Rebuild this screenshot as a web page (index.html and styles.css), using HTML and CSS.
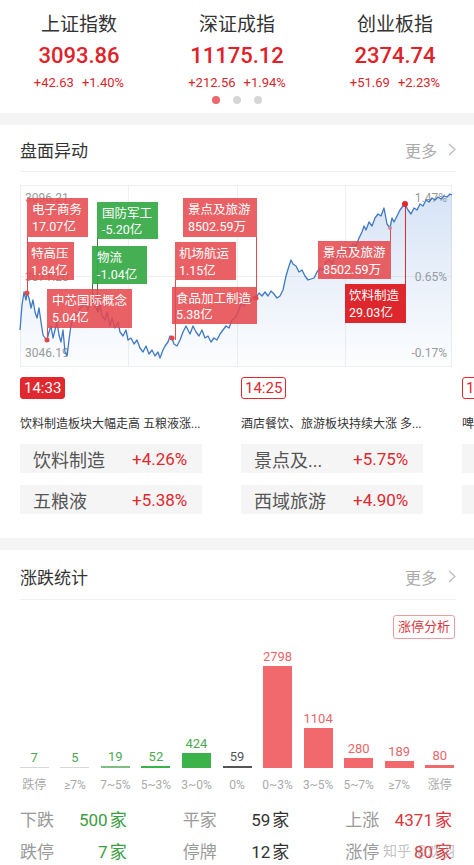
FILE: index.html
```html
<!doctype html>
<html lang="zh-CN">
  <head>
    <meta charset="utf-8" />
    <meta name="viewport" content="width=device-width, initial-scale=1" />
    <title>行情 - 盘面异动</title>
    <link rel="stylesheet" href="styles.css">
  </head>
  <body>
    <div class="indices">
      <div class="index">
        <div class="index-name">上证指数</div>
        <div class="index-value">3093.86</div>
        <div class="index-change"><span>+42.63</span><span>+1.40%</span></div>
      </div>
      <div class="index">
        <div class="index-name">深证成指</div>
        <div class="index-value">11175.12</div>
        <div class="index-change"><span>+212.56</span><span>+1.94%</span></div>
      </div>
      <div class="index">
        <div class="index-name">创业板指</div>
        <div class="index-value">2374.74</div>
        <div class="index-change"><span>+51.69</span><span>+2.23%</span></div>
      </div>
    </div>
    <div class="pager">
      <span class="dot active"></span><span class="dot"></span><span class="dot"></span>
    </div>

    <div class="band"></div>

    <!-- 盘面异动 -->
    <div class="section-head">
      <span class="section-title">盘面异动</span>
      <span class="more">更多
        <svg width="8" height="13" viewBox="0 0 8 13"><polyline points="1,1 7,6.5 1,12" fill="none" stroke="#bbb" stroke-width="1.2"/></svg>
      </span>
    </div>

    <svg class="intraday" width="474" height="198" viewBox="0 172 474 198">
      <defs>
        <linearGradient id="area" x1="0" y1="186" x2="0" y2="366" gradientUnits="userSpaceOnUse">
          <stop offset="0" stop-color="#7aa6e0" stop-opacity="0.32"/>
          <stop offset="1" stop-color="#7aa6e0" stop-opacity="0.02"/>
        </linearGradient>
      </defs>
      <g stroke="#efefef" stroke-width="1" fill="none">
        <rect x="20.5" y="185.5" width="431" height="181"/>
        <line x1="128.5" y1="186" x2="128.5" y2="366"/>
        <line x1="237.5" y1="186" x2="237.5" y2="366"/>
        <line x1="345.5" y1="186" x2="345.5" y2="366"/>
        <line x1="20" y1="276.5" x2="452" y2="276.5"/>
      </g>
      <g class="axis">
        <text x="25" y="202">3096.21</text>
        <text x="25" y="281">3071.20</text>
        <text x="25" y="357">3046.19</text>
        <text x="447" y="202" text-anchor="end">1.47%</text>
        <text x="447" y="281" text-anchor="end">0.65%</text>
        <text x="447" y="357" text-anchor="end">-0.17%</text>
      </g>
      <path fill="url(#area)" d="M20,330 L22,305 24,292 26,300 27,293 29,298 31,308 33,300 35,312 37,318 39,308 41,322 43,335 45,338 47,340 49,332 51,326 53,338 55,330 57,322 59,335 61,342 63,330 65,352 67,356 69,340 71,325 73,318 75,312 78,316 80,308 83,306 86,302 88,310 90,303 93,298 95,306 98,312 100,304 102,316 105,320 107,312 110,326 112,318 115,328 118,322 120,332 123,336 126,330 128,340 131,338 134,344 137,340 140,348 143,352 146,346 149,354 152,350 155,356 158,352 160,358 163,350 165,346 168,342 170,336 172,338 174,344 177,346 180,340 183,332 186,326 188,330 190,334 193,326 196,332 199,336 202,330 205,338 208,336 211,342 214,338 217,340 220,334 223,330 226,326 229,328 232,320 235,318 238,312 241,304 244,306 247,300 250,302 253,297 256,298 259,293 262,296 265,292 268,296 271,291 274,294 277,298 280,296 283,290 286,276 289,266 291,260 293,264 296,266 299,272 302,270 305,276 308,280 311,279 314,278 317,272 320,268 323,270 326,262 329,260 332,264 335,256 338,258 341,252 344,254 347,248 350,250 353,244 356,246 359,238 362,232 364,226 366,230 369,222 372,226 375,218 378,214 381,216 384,208 387,224 390,228 392,218 394,222 397,216 400,210 403,206 405,204 408,210 411,214 414,208 417,210 420,204 423,206 426,200 429,202 432,198 435,200 438,197 441,199 444,196 447,197 450,194 452,195 L452,366 L20,366 Z"/>
      <path fill="none" stroke="#3f78c4" stroke-width="1.3" stroke-linejoin="round" d="M20,330 L22,305 24,292 26,300 27,293 29,298 31,308 33,300 35,312 37,318 39,308 41,322 43,335 45,338 47,340 49,332 51,326 53,338 55,330 57,322 59,335 61,342 63,330 65,352 67,356 69,340 71,325 73,318 75,312 78,316 80,308 83,306 86,302 88,310 90,303 93,298 95,306 98,312 100,304 102,316 105,320 107,312 110,326 112,318 115,328 118,322 120,332 123,336 126,330 128,340 131,338 134,344 137,340 140,348 143,352 146,346 149,354 152,350 155,356 158,352 160,358 163,350 165,346 168,342 170,336 172,338 174,344 177,346 180,340 183,332 186,326 188,330 190,334 193,326 196,332 199,336 202,330 205,338 208,336 211,342 214,338 217,340 220,334 223,330 226,326 229,328 232,320 235,318 238,312 241,304 244,306 247,300 250,302 253,297 256,298 259,293 262,296 265,292 268,296 271,291 274,294 277,298 280,296 283,290 286,276 289,266 291,260 293,264 296,266 299,272 302,270 305,276 308,280 311,279 314,278 317,272 320,268 323,270 326,262 329,260 332,264 335,256 338,258 341,252 344,254 347,248 350,250 353,244 356,246 359,238 362,232 364,226 366,230 369,222 372,226 375,218 378,214 381,216 384,208 387,224 390,228 392,218 394,222 397,216 400,210 403,206 405,204 408,210 411,214 414,208 417,210 420,204 423,206 426,200 429,202 432,198 435,200 438,197 441,199 444,196 447,197 450,194 452,195"/>
      <g stroke-width="1">
        <line x1="27.5" y1="237" x2="27.5" y2="293" stroke="#e04b50"/>
        <line x1="47.5" y1="328" x2="47.5" y2="340" stroke="#e04b50"/>
        <line x1="97.5" y1="239" x2="97.5" y2="312" stroke="#3a7a3a"/>
        <line x1="92.5" y1="284" x2="92.5" y2="303" stroke="#3a7a3a"/>
        <line x1="256.5" y1="237" x2="256.5" y2="298" stroke="#e04b50"/>
        <line x1="175.5" y1="280" x2="175.5" y2="340" stroke="#e04b50"/>
        <line x1="390.5" y1="228" x2="390.5" y2="241" stroke="#e04b50"/>
        <line x1="405.5" y1="204" x2="405.5" y2="284" stroke="#e02a30"/>
      </g>
      <g class="tag red">
        <rect x="27" y="198" width="61" height="39"/>
        <text x="32" y="214">电子商务</text><text x="32" y="231">17.07亿</text>
      </g>
      <g class="tag red">
        <rect x="27" y="242" width="47" height="38"/>
        <text x="31" y="258">特高压</text><text x="31" y="275">1.84亿</text>
      </g>
      <g class="tag red">
        <rect x="47" y="289" width="85" height="39"/>
        <text x="52" y="305">中芯国际概念</text><text x="52" y="322">5.04亿</text>
      </g>
      <g class="tag green">
        <rect x="97" y="202" width="61" height="37"/>
        <text x="102" y="218">国防军工</text><text x="102" y="234">-5.20亿</text>
      </g>
      <g class="tag green">
        <rect x="92" y="246" width="55" height="38"/>
        <text x="97" y="262">物流</text><text x="97" y="279">-1.04亿</text>
      </g>
      <g class="tag red">
        <rect x="183" y="198" width="74" height="39"/>
        <text x="188" y="214">景点及旅游</text><text x="188" y="231">8502.59万</text>
      </g>
      <g class="tag red">
        <rect x="175" y="242" width="61" height="38"/>
        <text x="179" y="258">机场航运</text><text x="179" y="275">1.15亿</text>
      </g>
      <g class="tag red">
        <rect x="172" y="287" width="85" height="37"/>
        <text x="176" y="303">食品加工制造</text><text x="176" y="319">5.38亿</text>
      </g>
      <g class="tag red">
        <rect x="318" y="241" width="73" height="38"/>
        <text x="323" y="257">景点及旅游</text><text x="323" y="274">8502.59万</text>
      </g>
      <g class="tag strong">
        <rect x="345" y="284" width="61" height="39"/>
        <text x="349" y="300">饮料制造</text><text x="349" y="317">29.03亿</text>
      </g>
      <g fill="#e0484d">
        <circle cx="27" cy="293" r="2.5"/>
        <circle cx="47" cy="340" r="2.5"/>
        <circle cx="172" cy="338" r="2.5"/>
        <circle cx="256" cy="298" r="2.5"/>
        <circle cx="390" cy="228" r="2" fill="#c98a9a"/>
        <circle cx="405" cy="204" r="3" fill="#e0262c"/>
      </g>
    </svg>

    <div class="events">
      <div class="event">
        <span class="time now">14:33</span>
        <div class="headline">饮料制造板块大幅走高 五粮液涨...</div>
        <div class="stock"><span class="stock-name">饮料制造</span><span class="stock-pct">+4.26%</span></div>
        <div class="stock"><span class="stock-name">五粮液</span><span class="stock-pct">+5.38%</span></div>
      </div>
      <div class="event">
        <span class="time">14:25</span>
        <div class="headline">酒店餐饮、旅游板块持续大涨 多...</div>
        <div class="stock"><span class="stock-name">景点及...</span><span class="stock-pct">+5.75%</span></div>
        <div class="stock"><span class="stock-name">西域旅游</span><span class="stock-pct">+4.90%</span></div>
      </div>
      <div class="event">
        <span class="time">13:58</span>
        <div class="headline">啤酒概念股走强 青岛啤酒涨...</div>
        <div class="stock"><span class="stock-name">啤酒</span><span class="stock-pct">+3.12%</span></div>
        <div class="stock"><span class="stock-name">青岛啤酒</span><span class="stock-pct">+6.02%</span></div>
      </div>
    </div>

    <div class="band band-low"></div>

    <!-- 涨跌统计 -->
    <div class="section-head section-head-2">
      <span class="section-title">涨跌统计</span>
      <span class="more">更多
        <svg width="8" height="13" viewBox="0 0 8 13"><polyline points="1,1 7,6.5 1,12" fill="none" stroke="#bbb" stroke-width="1.2"/></svg>
      </span>
    </div>
    <div class="tools"><span class="btn-outline">涨停分析</span></div>

    <div class="dist">
      <div class="col down"><div class="plot"><span class="num">7</span><div class="bar flat" style="height:1px"></div></div><span class="lbl">跌停</span></div>
      <div class="col down"><div class="plot"><span class="num">5</span><div class="bar flat" style="height:1px"></div></div><span class="lbl">≥7%</span></div>
      <div class="col down"><div class="plot"><span class="num">19</span><div class="bar thin" style="height:2px"></div></div><span class="lbl">7~5%</span></div>
      <div class="col down"><div class="plot"><span class="num">52</span><div class="bar" style="height:2px"></div></div><span class="lbl">5~3%</span></div>
      <div class="col down"><div class="plot"><span class="num">424</span><div class="bar" style="height:15px"></div></div><span class="lbl">3~0%</span></div>
      <div class="col flat-col"><div class="plot"><span class="num">59</span><div class="bar" style="height:2px"></div></div><span class="lbl">0%</span></div>
      <div class="col up"><div class="plot"><span class="num">2798</span><div class="bar" style="height:102px"></div></div><span class="lbl">0~3%</span></div>
      <div class="col up"><div class="plot"><span class="num">1104</span><div class="bar" style="height:40px"></div></div><span class="lbl">3~5%</span></div>
      <div class="col up"><div class="plot"><span class="num">280</span><div class="bar" style="height:10px"></div></div><span class="lbl">5~7%</span></div>
      <div class="col up"><div class="plot"><span class="num">189</span><div class="bar" style="height:7px"></div></div><span class="lbl">≥7%</span></div>
      <div class="col up"><div class="plot"><span class="num">80</span><div class="bar" style="height:3px"></div></div><span class="lbl">涨停</span></div>
    </div>

    <div class="stats">
      <div class="stat"><span class="stat-label">下跌</span><span class="stat-val green">500<i>家</i></span></div>
      <div class="stat"><span class="stat-label">平家</span><span class="stat-val">59<i>家</i></span></div>
      <div class="stat"><span class="stat-label">上涨</span><span class="stat-val red">4371<i>家</i></span></div>
      <div class="stat"><span class="stat-label">跌停</span><span class="stat-val green">7<i>家</i></span></div>
      <div class="stat"><span class="stat-label">停牌</span><span class="stat-val">12<i>家</i></span></div>
      <div class="stat"><span class="stat-label">涨停</span><span class="stat-val red">80<i>家</i></span></div>
    </div>

    <div class="watermark">知乎 @欢羽</div>
  </body>
</html>
```

FILE: styles.css
```css
* {
  box-sizing: border-box;
}

body {
  margin: 0;
  width: 474px;
  overflow: hidden;
  position: relative;
  background: #fff;
  color: #333;
  font-family: Roboto, "Noto Sans CJK SC", sans-serif;
}

/* Indices */
.indices {
  display: flex;
  padding-top: 12px;
}

.index {
  flex: 1;
  text-align: center;
}

.index-name {
  font-size: 19px;
  line-height: 26px;
  color: #333;
}

.index-value {
  margin-top: 4px;
  font-size: 22px;
  line-height: 28px;
  font-weight: 500;
  color: #df2229;
}

.index-change {
  display: flex;
  justify-content: center;
  gap: 8px;
  margin-top: 4px;
  font-size: 13px;
  line-height: 18px;
  color: #d9262c;
}

.pager {
  display: flex;
  justify-content: center;
  gap: 13px;
  margin: 4px 0 9px;
}

.dot {
  width: 8px;
  height: 8px;
  border-radius: 50%;
  background: #d6d6d6;
}

.dot.active {
  background: #ec676b;
}

.band {
  height: 12px;
  background: #f4f4f4;
}

.band-low {
  margin-top: 24px;
}

/* Section headers */
.section-head {
  display: flex;
  align-items: center;
  justify-content: space-between;
  height: 47px;
  padding-top: 3px;
  margin: 0 18px 0 20px;
  border-bottom: 1px solid #f0f0f0;
}

.section-head-2 {
  height: 50px;
  padding-top: 4px;
}

.section-title {
  font-size: 17px;
  color: #333;
}

.more {
  display: flex;
  align-items: center;
  gap: 11px;
  font-size: 16px;
  color: #aaa;
}

/* Intraday chart */
.intraday {
  display: block;
}

.axis text {
  font-size: 12px;
  fill: #999;
}

.tag text {
  font-size: 12.5px;
  fill: #fff;
}

.tag.red rect {
  fill: #e5474c;
  fill-opacity: 0.86;
}

.tag.green rect {
  fill: #34a844;
  fill-opacity: 0.92;
}

.tag.strong rect {
  fill: #de272d;
}

/* Event cards */
.events {
  display: flex;
  gap: 39px;
  padding-left: 20px;
  margin-top: 7px;
  overflow: hidden;
}

.event {
  flex: 0 0 182px;
}

.time {
  display: inline-block;
  height: 22px;
  line-height: 20px;
  padding: 0 3px;
  border: 1px solid #e0282e;
  border-radius: 3px;
  font-size: 15px;
  color: #e0282e;
}

.time.now {
  background: #e0282e;
  color: #fff;
}

.headline {
  margin-top: 16px;
  font-size: 12px;
  line-height: 18px;
  color: #333;
  white-space: nowrap;
  overflow: hidden;
}

.stock {
  display: flex;
  align-items: center;
  height: 29px;
  margin-top: 11px;
  padding-left: 13px;
  background: #f5f5f5;
}

.stock + .stock {
  margin-top: 12px;
}

.stock-name {
  width: 80px;
  margin-right: 19px;
  font-size: 18px;
  color: #555;
  white-space: nowrap;
  overflow: hidden;
}

.stock-pct {
  font-size: 17px;
  color: #e0282e;
}

/* 涨跌分布 */
.tools {
  display: flex;
  justify-content: flex-end;
  padding-right: 19px;
  margin-top: 15px;
}

.btn-outline {
  height: 24px;
  line-height: 22px;
  padding: 0 4px;
  border: 1px solid #e6a0a2;
  border-radius: 3px;
  font-size: 13px;
  color: #d9383d;
}

.dist {
  display: flex;
  padding: 0 14px;
}

.col {
  flex: 1;
  display: flex;
  flex-direction: column;
  align-items: center;
}

.plot {
  height: 129px;
  display: flex;
  flex-direction: column;
  justify-content: flex-end;
  align-items: center;
}

.num {
  font-size: 13px;
  line-height: 16px;
  margin-bottom: 1px;
}

.bar {
  width: 29px;
}

.lbl {
  margin-top: 9px;
  font-size: 12px;
  line-height: 16px;
  color: #aaa;
}

.down .num {
  color: #4da852;
}

.down .bar {
  background: #3cb24a;
}

.down .bar.flat {
  background: #d8d8d8;
}

.down .bar.thin {
  background: #7cbf80;
}

.flat-col .num {
  color: #555;
}

.flat-col .bar {
  background: #555;
}

.up .num {
  color: #e8676b;
}

.up .bar {
  background: #f2696d;
}

/* Summary */
.stats {
  display: grid;
  grid-template-columns: repeat(3, 1fr);
  column-gap: 56px;
  padding: 0 22px 0 20px;
  margin-top: 9px;
}

.stat {
  display: flex;
  align-items: center;
  justify-content: space-between;
  height: 32px;
  font-size: 17px;
}

.stat-label {
  color: #999;
}

.stat-val {
  color: #333;
}

.stat-val i {
  font-style: normal;
  margin-left: 2px;
}

.stat-val.green {
  color: #3a9d3f;
}

.stat-val.red {
  color: #e0343a;
}

.watermark {
  position: absolute;
  left: 383px;
  top: 840px;
  font-size: 14px;
  color: rgba(140, 140, 140, 0.55);
}
```
